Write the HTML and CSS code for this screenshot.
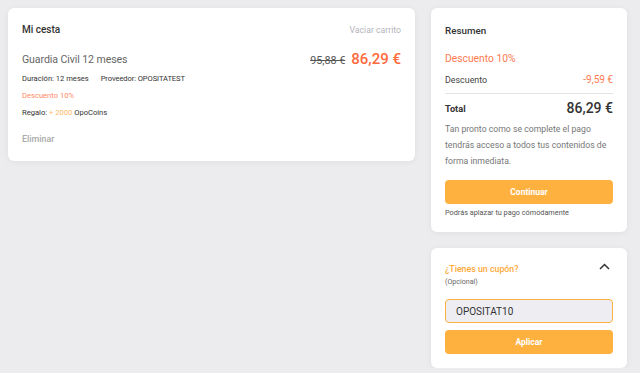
FILE: index.html
```html
<!DOCTYPE html>
<html lang="es">
<head>
  <meta charset="UTF-8">
  <meta name="viewport" content="width=device-width, initial-scale=1.0">
  <title>Mi cesta</title>
  <link rel="stylesheet" href="styles.css">
</head>
<body>

<div class="layout">
  <div class="card cart">
    <div class="cart-head">
      <h2>Mi cesta</h2>
      <a class="empty-link">Vaciar carrito</a>
    </div>

    <div class="item-row">
      <span class="item-name">Guardia Civil 12 meses</span>
      <span class="prices">
        <span class="old-price">95,88 €</span>
        <span class="new-price">86,29 €</span>
      </span>
    </div>

    <div class="meta first">
      <span>Duración: 12 meses</span>
      <span class="provider">Proveedor: OPOSITATEST</span>
    </div>
    <div class="meta discount">Descuento 10%</div>
    <div class="meta">Regalo: <span class="coins">+ 2000</span> OpoCoins</div>

    <a class="remove">Eliminar</a>
  </div>

  <div class="side">
    <div class="card summary">
      <h2>Resumen</h2>
      <div class="discount-title">Descuento 10%</div>
      <div class="line">
        <span>Descuento</span>
        <span class="minus">-9,59 €</span>
      </div>
      <div class="total">
        <span>Total</span>
        <span class="total-price">86,29 €</span>
      </div>
      <p class="note">Tan pronto como se complete el pago tendrás acceso a todos tus contenidos de forma inmediata.</p>
      <button class="btn">Continuar</button>
      <div class="small">Podrás aplazar tu pago cómodamente</div>
    </div>

    <div class="card coupon">
      <div class="coupon-head">
        <div>
          <div class="coupon-title">¿Tienes un cupón?</div>
          <div class="optional">(Opcional)</div>
        </div>
        <svg class="chevron" width="11" height="7" viewBox="0 0 11 7"><path d="M1 6 L5.5 1.5 L10 6" fill="none" stroke="#333" stroke-width="1.5"/></svg>
      </div>
      <input class="coupon-input" type="text" value="OPOSITAT10">
      <button class="btn">Aplicar</button>
    </div>
  </div>
</div>

</body>
</html>
```

FILE: styles.css
```css
body {
  font-family: Roboto, 'Noto Sans', sans-serif;
  background-color: #ececef;
  margin: 0;
  padding: 0;
  color: #333;
}

.layout {
  display: flex;
  align-items: flex-start;
  gap: 16px;
  padding: 8px 13px 0 8px;
}

.card {
  background-color: #fff;
  border-radius: 6px;
  box-shadow: 0 1px 6px rgba(0, 0, 0, 0.06);
  box-sizing: border-box;
}

h2 {
  margin: 0;
  font-size: 10px;
  line-height: 16px;
  font-weight: 500;
  color: #333;
}

/* left card */

.cart {
  width: 407px;
  height: 153px;
  padding: 14px 14px 0 14px;
}

.cart-head {
  display: flex;
  justify-content: space-between;
  align-items: center;
  height: 16px;
}

.empty-link {
  font-size: 8.7px;
  color: #b5b5bd;
}

.item-row {
  display: flex;
  justify-content: space-between;
  align-items: center;
  margin-top: 11px;
  height: 20px;
}

.item-name {
  font-size: 10.6px;
  letter-spacing: -0.1px;
  color: #666;
}

.prices {
  display: flex;
  align-items: baseline;
  gap: 6px;
}

.old-price {
  font-size: 10.8px;
  color: #555;
  text-decoration: line-through;
}

.new-price {
  font-size: 15px;
  font-weight: 500;
  color: #ff6a3d;
}

.meta {
  font-size: 7.6px;
  line-height: 12px;
  color: #333;
  margin-top: 5px;
}

.meta.first {
  margin-top: 4px;
}

.provider {
  margin-left: 10px;
  letter-spacing: -0.1px;
}

.discount {
  color: #ff8a65;
}

.coins {
  color: #ffb86a;
}

.remove {
  display: block;
  margin-top: 13px;
  font-size: 8.9px;
  line-height: 14px;
  font-weight: 500;
  color: #aaa;
}

/* right column */

.side {
  width: 196px;
  display: flex;
  flex-direction: column;
  gap: 16px;
}

.summary {
  height: 224px;
  padding: 15px 14px 0 14px;
}

.summary h2 {
  font-size: 9.8px;
}

.discount-title {
  margin-top: 13px;
  font-size: 10.3px;
  line-height: 14px;
  color: #ff7a4f;
}

.line {
  display: flex;
  justify-content: space-between;
  align-items: center;
  font-size: 8.9px;
  line-height: 12px;
  color: #444;
  margin-top: 8px;
  padding-bottom: 7px;
  border-bottom: 1px solid #e3e3e6;
}

.minus {
  font-size: 10px;
  color: #ff7a4f;
}

.total {
  display: flex;
  justify-content: space-between;
  align-items: center;
  height: 18px;
  margin-top: 5px;
  font-size: 9.2px;
  font-weight: 700;
  color: #333;
}

.total-price {
  font-size: 14px;
  font-weight: 500;
}

.note {
  margin: 4px 0 0 0;
  font-size: 8.7px;
  line-height: 16px;
  color: #777;
}

.btn {
  display: block;
  width: 100%;
  height: 24px;
  border: none;
  border-radius: 4px;
  background-color: #ffb13f;
  color: #fff;
  font-family: inherit;
  font-size: 8.5px;
  font-weight: 700;
  cursor: pointer;
}

.summary .btn {
  margin-top: 11px;
}

.small {
  margin-top: 4px;
  font-size: 7.3px;
  line-height: 10px;
  color: #555;
}

.coupon {
  height: 120px;
  padding: 15px 14px 0 14px;
}

.coupon-head {
  display: flex;
  justify-content: space-between;
  align-items: flex-start;
}

.coupon-title {
  font-size: 8.8px;
  line-height: 12px;
  font-weight: 500;
  color: #ffa93a;
}

.optional {
  margin-top: 2px;
  font-size: 7.1px;
  line-height: 10px;
  color: #666;
}

.chevron {
  margin-top: 0;
  margin-right: 3px;
}

.coupon-input {
  display: block;
  width: 100%;
  box-sizing: border-box;
  height: 24px;
  margin-top: 12px;
  padding: 0 10px;
  border: 1.5px solid #ffb13f;
  border-radius: 4px;
  background-color: #eeeef2;
  font-family: inherit;
  font-size: 10px;
  color: #333;
}

.coupon .btn {
  margin-top: 7px;
  font-size: 8.5px;
}
```
